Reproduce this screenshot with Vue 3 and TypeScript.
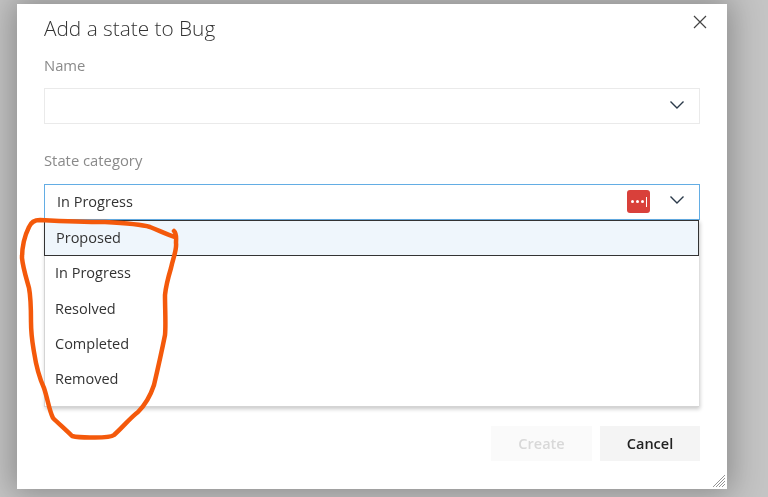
<script setup lang="ts">
const states: string[] = ['Proposed', 'In Progress', 'Resolved', 'Completed', 'Removed']
</script>

<template>
  <div class="backdrop">
    <div class="dialog">
      <header class="head">
        <h1 class="title">Add a state to Bug</h1>
        <svg class="close" width="16" height="16" viewBox="0 0 16 16" aria-label="Close">
          <path d="M2 2 L14 14 M14 2 L2 14" stroke="#444" stroke-width="1.2" fill="none" />
        </svg>
      </header>

      <label class="label name-label">Name</label>
      <div class="select name-select">
        <svg class="chev" width="16" height="10" viewBox="0 0 16 10">
          <path d="M1.5 1.5 L8 8 L14.5 1.5" stroke="#2b3a4a" stroke-width="1.4" fill="none" />
        </svg>
      </div>

      <label class="label cat-label">State category</label>
      <div class="field">
        <div class="select active">
          <span class="value">In Progress</span>
          <span class="lastpass">
            <i></i><i></i><i></i><b></b>
          </span>
          <svg class="chev" width="16" height="10" viewBox="0 0 16 10">
            <path d="M1.5 1.5 L8 8 L14.5 1.5" stroke="#2b3a4a" stroke-width="1.4" fill="none" />
          </svg>
        </div>
        <ul class="menu">
          <li v-for="(s, i) in states" :key="s" class="item" :class="{ current: i === 0 }">{{ s }}</li>
        </ul>
      </div>

      <footer class="foot">
        <button class="btn disabled" type="button">Create</button>
        <button class="btn cancel" type="button">Cancel</button>
      </footer>

      <svg class="grip" width="14" height="14" viewBox="0 0 14 14">
        <path d="M1 13 L13 1 M4 13 L13 4 M7 13 L13 7 M10 13 L13 10" stroke="#7a7a7a" stroke-width="0.8" fill="none" />
      </svg>
    </div>

    <svg class="scribble" width="768" height="497" viewBox="0 0 768 497">
      <path
        d="M174 231 C177 234 176 238 176 243 C177 250 173 258 171 268 C168 278 166 285 165 295 C165 310 166 325 165 335 C162 350 158 368 154 385 C150 397 145 405 138 412 C130 418 122 428 114 435 C110 438 100 437.500 90 437.500 C82 437.500 76 437 72 436 C66 430 58 423 53 418 C49 410 48 400 44 388 C38 375 36 365 34 352 C32 340 31 335 31 322 C31 310 31 298 29 288 C26 277 23 268 22 258 C22 245 25 235 29 227 C31 222 34 220 40 220 C60 221 85 222 105 222 C125 223 140 224 150 227 C160 231 168 235 175 237"
        fill="none" stroke="#f4590b" stroke-width="4.500" stroke-linecap="round" stroke-linejoin="round"
      />
    </svg>
  </div>
</template>

<style>
html, body { margin: 0; padding: 0; background: #c4c4c4; }
</style>

<style scoped>
.backdrop {
  position: relative;
  width: 768px;
  height: 497px;
  overflow: hidden;
  box-sizing: border-box;
  padding: 4px 0 0 17px;
  background: #c4c4c4;
  font-family: "Open Sans", "Noto Sans", sans-serif;
  filter: blur(0.35px);
}
.dialog {
  position: relative;
  box-sizing: border-box;
  width: 710px;
  height: 485px;
  background: #fff;
  padding: 0 27px 28px 27px;
  display: flex;
  flex-direction: column;
  box-shadow: 0 0 30px 4px rgba(0, 0, 0, 0.3);
}
.head {
  display: flex;
  justify-content: space-between;
  align-items: flex-start;
  height: 48px;
}
.title {
  margin: 9px 0 0;
  font-size: 20.800px;
  line-height: 30px;
  font-weight: 300;
  color: #333;
}
.close {
  margin: 10px -8px 0 0;
}
.label {
  font-size: 14.800px;
  line-height: 20px;
  color: #8a8a8a;
}
.name-label { margin: 3px 0 0; }
.name-select { margin-top: 13px; }
.cat-label { margin-top: 26px; }
.field {
  position: relative;
  margin-top: 14px;
}
.select {
  box-sizing: border-box;
  height: 36px;
  border: 1px solid #eaeaea;
  display: flex;
  align-items: center;
  justify-content: flex-end;
  padding: 0 14px 0 12px;
}
.select.active {
  border-color: #63ade4;
  justify-content: flex-start;
}
.value {
  font-size: 14.500px;
  color: #333;
  flex: 1;
  padding-bottom: 2px;
}
.chev { display: block; margin-top: -2px; }
.active .chev { margin-top: -4px; }
.lastpass {
  width: 23px;
  height: 23px;
  border-radius: 3px;
  background: #d9403a;
  margin-right: 19px;
  margin-top: -1px;
  display: flex;
  align-items: center;
  justify-content: center;
  gap: 2px;
}
.lastpass i {
  width: 3px;
  height: 3px;
  border-radius: 50%;
  background: #fff;
}
.lastpass b {
  width: 1px;
  height: 10px;
  background: #fff;
}
.menu {
  position: absolute;
  top: 36px;
  left: 0;
  width: 655px;
  height: 187px;
  margin: 0;
  padding: 0;
  list-style: none;
  background: #fff;
  border-left: 1px solid #d4d4d4;
  border-bottom: 1px solid #d4d4d4;
  box-sizing: border-box;
  box-shadow: 1px 2px 4px rgba(0, 0, 0, 0.22);
  z-index: 1;
}
.item {
  box-sizing: border-box;
  height: 35.400px;
  padding-left: 10px;
  padding-bottom: 2px;
  display: flex;
  align-items: center;
  font-size: 14.500px;
  color: #333;
}
.item.current {
  margin-left: -1px;
  padding-left: 11px;
  height: 36px;
  background: #eff6fc;
  border: 1px solid #333;
}
.foot {
  margin-top: auto;
  display: flex;
  justify-content: flex-end;
  gap: 8px;
}
.btn {
  width: 100px;
  height: 35px;
  padding: 0;
  border: 0;
  font-family: inherit;
  font-size: 14.500px;
  font-weight: 600;
  background: #f4f4f4;
  color: #222;
}
.btn.disabled {
  width: 101px;
  background: #fafafa;
  color: #d8d8d8;
}
.grip {
  position: absolute;
  right: 1px;
  bottom: 1px;
}
.scribble {
  position: absolute;
  left: 0;
  top: 0;
  z-index: 2;
  pointer-events: none;
}
</style>
